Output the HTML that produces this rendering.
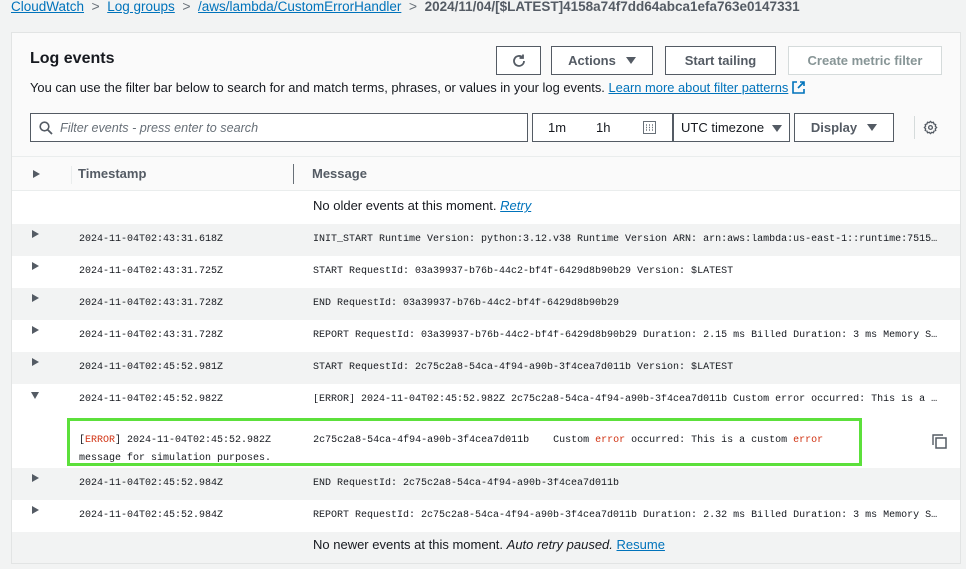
<!DOCTYPE html>
<html><head><meta charset="utf-8"><style>
*{box-sizing:border-box;margin:0;padding:0}
body{width:966px;height:569px;overflow:hidden;background:#f2f3f3;font-family:"Liberation Sans",sans-serif;color:#16191f;position:relative}
.a{position:absolute}
.bc{top:-2px;font-size:13.5px;white-space:nowrap}
.bc a{color:#0073bb;text-decoration:underline}
.sep{color:#687078;font-size:14px}
.panel{left:11px;top:32px;width:950px;height:532px;background:#fafafa;border:1px solid #e2e4e4;overflow:hidden}
.btn{border:1px solid #545b64;background:#fff;height:29px;font-weight:bold;font-size:13px;color:#545b64;display:flex;align-items:center;justify-content:center;gap:10px;white-space:nowrap}
.tri{width:0;height:0;border-left:5px solid transparent;border-right:5px solid transparent;border-top:7px solid #545b64;display:inline-block}
.row{position:absolute;left:0;width:950px;height:32px;font-family:"Liberation Mono",monospace;font-size:10px;color:#16191f}
.g{background:#f2f3f3}.w{background:#fff}
.row .ar{position:absolute;left:20px;top:6px;width:0;height:0;border-top:4px solid transparent;border-bottom:4px solid transparent;border-left:7px solid #545b64}
.row .ts{position:absolute;left:67px;top:10px}
.row .m{position:absolute;left:301px;top:10px;width:630px;white-space:nowrap;overflow:hidden;text-overflow:ellipsis}
.red{color:#d13212}
</style></head><body>
<div class="a bc" style="left:11px"><a>CloudWatch</a> &nbsp;<span class="sep">&gt;</span>&nbsp; <a>Log groups</a> &nbsp;<span class="sep">&gt;</span>&nbsp; <a>/aws/lambda/CustomErrorHandler</a> &nbsp;<span class="sep">&gt;</span>&nbsp; <span style="color:#545b64;font-weight:bold">2024/11/04/[$LATEST]4158a74f7dd64abca1efa763e0147331</span></div>
<div class="a panel">
 <div class="a" style="left:18px;top:17px;font-size:16px;font-weight:bold">Log events</div>
 <div class="a" style="left:18px;top:47px;font-size:12.9px;white-space:nowrap">You can use the filter bar below to search for and match terms, phrases, or values in your log events. <span style="color:#0073bb;text-decoration:underline">Learn more about filter patterns</span> <svg width="13" height="13" viewBox="0 0 13 13" style="vertical-align:-2px"><path d="M5 1H1v11h11V8M8 1h4v4M12 1L6 7" stroke="#0073bb" stroke-width="1.6" fill="none"/></svg></div>
 <div class="a btn" style="left:484px;top:13px;width:45px"><svg width="16" height="16" viewBox="0 0 16 16"><path d="M13 8a5 5 0 1 1-1.5-3.6M12 1.5v3.5H8.5" stroke="#545b64" stroke-width="1.8" fill="none"/></svg></div>
 <div class="a btn" style="left:539px;top:13px;width:102px">Actions <span class="tri"></span></div>
 <div class="a btn" style="left:653px;top:13px;width:111px">Start tailing</div>
 <div class="a btn" style="left:776px;top:13px;width:154px;border-color:#d5dbdb;color:#879596">Create metric filter</div>
 <div class="a" style="left:18px;top:80px;width:498px;height:29px;background:#fff;border:1px solid #545b64;font-size:12.6px;color:#687078;font-style:italic;padding:7px 0 0 29px"><svg class="a" style="left:8px;top:7px" width="14" height="14" viewBox="0 0 14 14"><circle cx="5.5" cy="5.5" r="4.3" stroke="#545b64" stroke-width="1.6" fill="none"/><path d="M8.7 8.7L13 13" stroke="#545b64" stroke-width="1.8"/></svg>Filter events - press enter to search</div>
 <div class="a" style="left:520px;top:80px;width:141px;height:29px;background:#fff;border:1px solid #545b64;font-size:13px"><span class="a" style="left:15px;top:6px">1m</span><span class="a" style="left:63px;top:6px">1h</span><svg class="a" style="left:110px;top:7px" width="13" height="13" viewBox="0 0 13 13"><rect x="0.5" y="0.5" width="12" height="12" fill="none" stroke="#687078"/><path d="M3 4h1M6 4h1M9 4h1M3 6.5h1M6 6.5h1M9 6.5h1M3 9h1M6 9h1M9 9h1" stroke="#687078" stroke-width="1.4"/></svg></div>
 <div class="a" style="left:661px;top:80px;width:117px;height:29px;background:#fff;border:1px solid #545b64;font-size:13px;padding:6px 0 0 7px;white-space:nowrap">UTC timezone <span class="tri" style="margin-left:4px"></span></div>
 <div class="a btn" style="left:782px;top:80px;width:100px">Display <span class="tri"></span></div>
 <div class="a" style="left:902px;top:83px;width:1px;height:23px;background:#d5dbdb"></div>
 <svg class="a" style="left:911px;top:87px" width="15" height="15" viewBox="0 0 16 16"><path d="M8 1.5l1.3 1.3 1.8-.4.6 1.8 1.8.6-.4 1.8L14.5 8l-1.4 1.4.4 1.8-1.8.6-.6 1.8-1.8-.4L8 14.5l-1.4-1.3-1.8.4-.6-1.8-1.8-.6.4-1.8L1.5 8l1.3-1.4-.4-1.8 1.8-.6.6-1.8 1.8.4z" fill="none" stroke="#545b64" stroke-width="1.4"/><circle cx="8" cy="8" r="2" fill="none" stroke="#545b64" stroke-width="1.4"/></svg>
 <div class="a" style="left:0;top:123px;width:950px;height:1px;background:#eaeded"></div>
 <div class="a" style="left:0;top:124px;width:950px;height:34px;border-bottom:1px solid #eaeded">
  <div class="a" style="left:21px;top:13px;border-top:4px solid transparent;border-bottom:4px solid transparent;border-left:7px solid #545b64"></div>
  <div class="a" style="left:59px;top:9px;width:1px;height:18px;background:#eaeded"></div>
  <div class="a" style="left:66px;top:9px;font-size:13px;font-weight:bold;color:#545b64">Timestamp</div>
  <div class="a" style="left:281px;top:7px;width:1px;height:20px;background:#687078"></div>
  <div class="a" style="left:300px;top:9px;font-size:13px;font-weight:bold;color:#545b64">Message</div>
 </div>
 <div class="a w" style="left:0;top:158px;width:950px;height:33px;font-size:13px"><span class="a" style="left:301px;top:7px">No older events at this moment. <i style="color:#0073bb;text-decoration:underline">Retry</i></span></div>
 <div class="row g" style="top:191px"><div class="ar"></div><span class="ts">2024-11-04T02:43:31.618Z</span><span class="m">INIT_START Runtime Version: python:3.12.v38 Runtime Version ARN: arn:aws:lambda:us-east-1::runtime:7515e00d6763496e7a147ffa395ef5b0f0c1ffd6064130abb5ecde5a6d630e86</span></div>
 <div class="row w" style="top:223px"><div class="ar"></div><span class="ts">2024-11-04T02:43:31.725Z</span><span class="m">START RequestId: 03a39937-b76b-44c2-bf4f-6429d8b90b29 Version: $LATEST</span></div>
 <div class="row g" style="top:255px"><div class="ar"></div><span class="ts">2024-11-04T02:43:31.728Z</span><span class="m">END RequestId: 03a39937-b76b-44c2-bf4f-6429d8b90b29</span></div>
 <div class="row w" style="top:287px"><div class="ar"></div><span class="ts">2024-11-04T02:43:31.728Z</span><span class="m">REPORT RequestId: 03a39937-b76b-44c2-bf4f-6429d8b90b29 Duration: 2.15 ms Billed Duration: 3 ms Memory Size: 128 MB</span></div>
 <div class="row g" style="top:319px"><div class="ar"></div><span class="ts">2024-11-04T02:45:52.981Z</span><span class="m">START RequestId: 2c75c2a8-54ca-4f94-a90b-3f4cea7d011b Version: $LATEST</span></div>
 <div class="row w" style="top:351px;height:84px"><div class="a" style="left:19px;top:8px;border-left:4px solid transparent;border-right:4px solid transparent;border-top:7px solid #545b64"></div><span class="ts">2024-11-04T02:45:52.982Z</span><span class="m">[ERROR] 2024-11-04T02:45:52.982Z 2c75c2a8-54ca-4f94-a90b-3f4cea7d011b Custom error occurred: This is a custom error message for simulation purposes.</span>
  <div class="a" style="left:55px;top:34px;width:795px;height:48px;border:3px solid #5ce03b"></div>
  <div class="a" style="left:67px;top:51px;white-space:nowrap">[<span class="red">ERROR</span>] 2024-11-04T02:45:52.982Z&nbsp;&nbsp;&nbsp;&nbsp;&nbsp;&nbsp;&nbsp;2c75c2a8-54ca-4f94-a90b-3f4cea7d011b&nbsp;&nbsp;&nbsp;&nbsp;Custom <span class="red">error</span> occurred: This is a custom <span class="red">error</span></div>
  <div class="a" style="left:67px;top:69px">message for simulation purposes.</div>
  <svg class="a" style="left:920px;top:50px" width="15" height="15" viewBox="0 0 15 15"><path d="M1 11V1h10" fill="none" stroke="#545b64" stroke-width="1.4"/><rect x="4" y="4" width="10" height="10" fill="none" stroke="#545b64" stroke-width="1.5"/></svg>
 </div>
 <div class="row g" style="top:435px"><div class="ar"></div><span class="ts">2024-11-04T02:45:52.984Z</span><span class="m">END RequestId: 2c75c2a8-54ca-4f94-a90b-3f4cea7d011b</span></div>
 <div class="row w" style="top:467px"><div class="ar"></div><span class="ts">2024-11-04T02:45:52.984Z</span><span class="m">REPORT RequestId: 2c75c2a8-54ca-4f94-a90b-3f4cea7d011b Duration: 2.32 ms Billed Duration: 3 ms Memory Size: 128 MB</span></div>
 <div class="a g" style="left:0;top:499px;width:950px;height:33px;font-size:13px"><span class="a" style="left:301px;top:5px">No newer events at this moment. <i>Auto retry paused.</i> <span style="color:#0073bb;text-decoration:underline">Resume</span></span></div>
</div>
</body></html>
